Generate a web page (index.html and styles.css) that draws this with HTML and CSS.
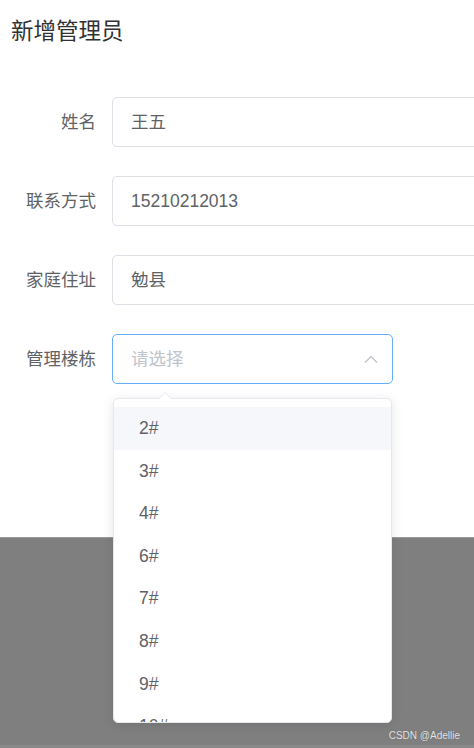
FILE: index.html
```html
<!DOCTYPE html>
<html lang="zh-CN">
<head>
<meta charset="utf-8">
<title>新增管理员</title>
<link rel="stylesheet" href="styles.css">
</head>
<body>
<div class="page">
  <div class="dialog">
    <div class="dialog-header">新增管理员</div>
    <form class="form">
      <div class="form-item">
        <label class="form-label">姓名</label>
        <div class="input wide">王五</div>
      </div>
      <div class="form-item">
        <label class="form-label">联系方式</label>
        <div class="input wide">15210212013</div>
      </div>
      <div class="form-item">
        <label class="form-label">家庭住址</label>
        <div class="input wide">勉县</div>
      </div>
      <div class="form-item">
        <label class="form-label">管理楼栋</label>
        <div class="select-wrap">
          <div class="input select is-focus">
            <span class="placeholder">请选择</span>
            <svg class="chevron" width="14" height="8" viewBox="0 0 14 8"><polyline points="1,7.5 7,1.5 13,7.5" fill="none" stroke="#c0c4cc" stroke-width="1.4"/></svg>
          </div>
          <div class="dropdown">
            <span class="arrow"></span>
            <ul class="dropdown-list">
              <li class="option hover">2#</li>
              <li class="option">3#</li>
              <li class="option">4#</li>
              <li class="option">6#</li>
              <li class="option">7#</li>
              <li class="option">8#</li>
              <li class="option">9#</li>
              <li class="option">10#</li>
            </ul>
          </div>
        </div>
      </div>
    </form>
  </div>
  <div class="mask"></div>
  <div class="watermark">CSDN @Adellie</div>
</div>
</body>
</html>
```

FILE: styles.css
```css
* { box-sizing: border-box; }
html, body {
  margin: 0;
  padding: 0;
  height: 100%;
  overflow: hidden;
}
body {
  font-family: "Liberation Sans", "Noto Sans CJK SC", sans-serif;
  color: #606266;
  background: #ffffff;
}
.page {
  position: relative;
  height: 748px;
  display: flex;
  flex-direction: column;
}
.dialog {
  height: 537px;
  background: #ffffff;
  flex: none;
}
.dialog-header {
  padding: 16px 0 0 11px;
  height: 48px;
  line-height: 32px;
  font-size: 22.5px;
  color: #303133;
}
.form {
  margin: 0;
  padding-top: 49px;
  display: flex;
  flex-direction: column;
  gap: 29px;
}
.form-item {
  display: flex;
  align-items: center;
  height: 50px;
}
.form-label {
  width: 112px;
  flex: none;
  padding-right: 16px;
  text-align: right;
  font-size: 17.5px;
  line-height: 50px;
  color: #606266;
}
.input {
  height: 50px;
  border: 1px solid #dcdfe6;
  border-radius: 5px;
  padding: 0 18px;
  font-size: 17.5px;
  line-height: 48px;
  color: #606266;
  background: #fff;
}
.input.wide {
  width: 380px;
  flex: none;
}
.select-wrap {
  position: relative;
  width: 281px;
  flex: none;
}
.select {
  display: flex;
  align-items: center;
  justify-content: space-between;
}
.select.is-focus {
  border-color: #64adf7;
}
.placeholder {
  color: #c0c4cc;
}
.chevron {
  margin-right: -4px;
}
.mask {
  flex: 1;
  background: #7f7f7f;
  border-top: 1px solid #9a9a9a;
  border-bottom: 3px solid #8a8a8a;
}
.dropdown {
  position: absolute;
  top: 64px;
  left: 1px;
  width: 279px;
  height: 325px;
  background: #fff;
  border: 1px solid #e4e7ed;
  border-radius: 5px;
  box-shadow: 0 2px 12px rgba(0, 0, 0, 0.1);
  z-index: 10;
}
.arrow {
  position: absolute;
  top: -7px;
  left: 44px;
  width: 0;
  height: 0;
  border-left: 7.5px solid transparent;
  border-right: 7.5px solid transparent;
  border-bottom: 7px solid #e4e7ed;
}
.arrow::after {
  content: "";
  position: absolute;
  top: 1px;
  left: -6.5px;
  border-left: 6.5px solid transparent;
  border-right: 6.5px solid transparent;
  border-bottom: 6px solid #fff;
}
.dropdown-list {
  list-style: none;
  margin: 0;
  padding: 8px 0 0;
  height: 100%;
  overflow: hidden;
  border-radius: 5px;
}
.option {
  height: 42.6px;
  line-height: 42.6px;
  padding: 0 25px;
  font-size: 17.5px;
  color: #606266;
}
.option.hover {
  background: #f5f7fa;
}
.watermark {
  position: absolute;
  right: 14px;
  bottom: 7px;
  font-size: 10px;
  color: #e6e6e6;
  text-shadow: 0 0 1px #555;
  z-index: 20;
}
```
